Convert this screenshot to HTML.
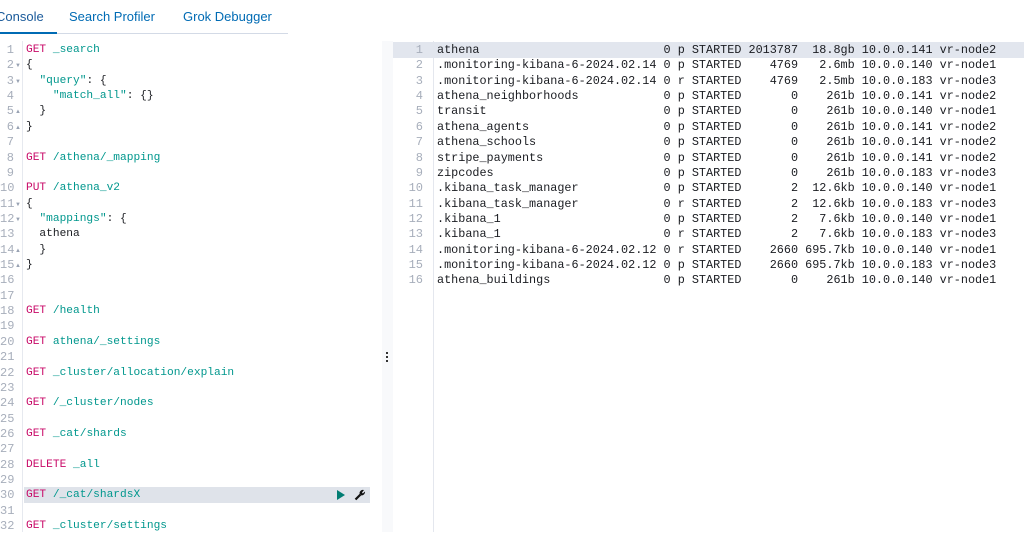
<!DOCTYPE html>
<html><head><meta charset="utf-8"><style>
*{margin:0;padding:0;box-sizing:border-box}
body{width:1024px;height:532px;overflow:hidden;background:#fff;font-family:"Liberation Sans",sans-serif;position:relative}
.tabs{position:absolute;left:0;top:0;height:34px;width:288px;border-bottom:1px solid #d3dae6}
.tab{position:absolute;top:9px;font-size:13px;color:#006bb4}
.ul{position:absolute;left:0;top:32px;width:57px;height:2px;background:#006bb4}
.mono{font-family:"Liberation Mono",monospace;white-space:pre;line-height:15px}
.ln{position:absolute;left:0;width:14px;text-align:right;font-size:12px;color:#a7aebb;font-family:"Liberation Mono",monospace}
.ar{position:absolute;left:15px;font-size:6px;color:#98a2b3}
.code{position:absolute;left:26px;font-size:11.2px;color:#1a1c21}
.m{color:#c80a68}.p{color:#00978d}
.gut{position:absolute;left:22px;top:41px;width:1px;height:491px;background:#e6e9ef}
.hl{position:absolute;left:24px;top:487px;width:346px;height:16px;background:#dfe3ea}
.strip{position:absolute;left:382px;top:41px;width:11px;height:491px;background:#f8f9fb}
.rl{position:absolute;left:433px;top:41px;width:1px;height:491px;background:#e4e7ee}
.rhl{position:absolute;left:393px;top:42px;width:631px;height:16px;background:#e2e6ee}
.rn{position:absolute;left:393px;width:30px;text-align:right;font-size:12px;color:#a7aebb}
.rc{position:absolute;left:437px;font-size:11.8px;color:#1a1c21}
</style></head><body>
<div class="tabs"></div>
<div class="tab" style="left:-4px;color:#1a5a9a">Console</div>
<div class="tab" style="left:69px">Search Profiler</div>
<div class="tab" style="left:183px">Grok Debugger</div>
<div class="ul"></div>
<div class="strip"></div>
<div style="position:absolute;left:386px;top:352px;width:2px;height:2px;background:#333;box-shadow:0 4px #333,0 8px #333"></div>
<div class="rl"></div>
<div class="hl"></div>
<div class="gut"></div>
<div class="rhl"></div>
<div id="L"></div>
<div id="R"></div>
<svg style="position:absolute;left:336px;top:490px" width="10" height="10"><path d="M1 0L9 5L1 10Z" fill="#017d73"/></svg>
<svg style="position:absolute;left:354px;top:489px" width="12" height="12"><path d="M1.5 10.5L6.5 5.5" stroke="#111" stroke-width="2.2"/><path d="M5.5 4.5A3.5 3.5 0 0 1 10 1L8 3.5L8.8 4.5L11 2.5A3.5 3.5 0 0 1 7.5 6.5Z" fill="#111"/></svg>
<script>
var L=['<span class="m">GET</span> <span class="p">_search</span>','{','  <span class="p">"query"</span>: {','    <span class="p">"match_all"</span>: {}','  }','}','','<span class="m">GET</span> <span class="p">/athena/_mapping</span>','','<span class="m">PUT</span> <span class="p">/athena_v2</span>','{','  <span class="p">"mappings"</span>: {','  athena','  }','}','','','<span class="m">GET</span> <span class="p">/health</span>','','<span class="m">GET</span> <span class="p">athena/_settings</span>','','<span class="m">GET</span> <span class="p">_cluster/allocation/explain</span>','','<span class="m">GET</span> <span class="p">/_cluster/nodes</span>','','<span class="m">GET</span> <span class="p">_cat/shards</span>','','<span class="m">DELETE</span> <span class="p">_all</span>','','<span class="m">GET</span> <span class="p">/_cat/shardsX</span>','','<span class="m">GET</span> <span class="p">_cluster/settings</span>'];
var up={5:1,6:1,14:1,15:1},dn={2:1,3:1,11:1,12:1};
var h='';
for(var i=0;i<L.length;i++){var y=43+i*15.36;
h+='<div class="ln mono" style="top:'+y+'px">'+(i+1)+'</div>';
if(up[i+1])h+='<div class="ar" style="top:'+(y+5)+'px">&#9650;</div>';
if(dn[i+1])h+='<div class="ar" style="top:'+(y+5)+'px">&#9660;</div>';
h+='<div class="code mono" style="top:'+y+'px">'+L[i]+'</div>';}
document.getElementById('L').innerHTML=h;
var R=[['athena','p','2013787','18.8gb','141','2'],['.monitoring-kibana-6-2024.02.14','p','4769','2.6mb','140','1'],['.monitoring-kibana-6-2024.02.14','r','4769','2.5mb','183','3'],['athena_neighborhoods','p','0','261b','141','2'],['transit','p','0','261b','140','1'],['athena_agents','p','0','261b','141','2'],['athena_schools','p','0','261b','141','2'],['stripe_payments','p','0','261b','141','2'],['zipcodes','p','0','261b','183','3'],['.kibana_task_manager','p','2','12.6kb','140','1'],['.kibana_task_manager','r','2','12.6kb','183','3'],['.kibana_1','p','2','7.6kb','140','1'],['.kibana_1','r','2','7.6kb','183','3'],['.monitoring-kibana-6-2024.02.12','r','2660','695.7kb','140','1'],['.monitoring-kibana-6-2024.02.12','p','2660','695.7kb','183','3'],['athena_buildings','p','0','261b','140','1']];
function pr(s,n){while(s.length<n)s+=' ';return s}function pl(s,n){while(s.length<n)s=' '+s;return s}
h='';
for(var i=0;i<R.length;i++){var r=R[i],y=43+i*15.36;
h+='<div class="rn mono" style="top:'+y+'px">'+(i+1)+'</div>';
h+='<div class="rc mono" style="top:'+y+'px">'+pr(r[0],31)+' 0 '+r[1]+' STARTED '+pl(r[2],7)+' '+pl(r[3],7)+' 10.0.0.'+r[4]+' vr-node'+r[5]+'</div>';}
document.getElementById('R').innerHTML=h;
</script>
</body></html>
